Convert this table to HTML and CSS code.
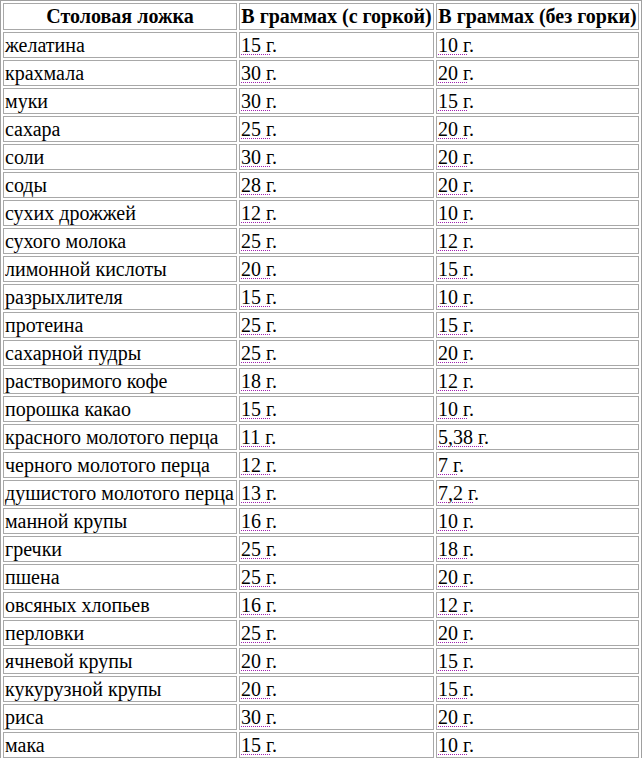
FILE: index.html
```html
<!DOCTYPE html>
<html lang="ru">
<head>
<meta charset="utf-8">
<title>Столовая ложка</title>
<link rel="stylesheet" href="styles.css">
</head>
<body>
<table class="grid">
<colgroup>
<col class="c1"><col class="c2"><col class="c3">
</colgroup>
<thead>
<tr><th>Столовая ложка</th><th>В граммах (с горкой)</th><th>В граммах (без горки)</th></tr>
</thead>
<tbody>
<tr><td>желатина</td><td><span class="u">15 г</span>.</td><td><span class="u">10 г</span>.</td></tr>
<tr><td>крахмала</td><td><span class="u">30 г</span>.</td><td><span class="u">20 г</span>.</td></tr>
<tr><td>муки</td><td><span class="u">30 г</span>.</td><td><span class="u">15 г</span>.</td></tr>
<tr><td>сахара</td><td><span class="u">25 г</span>.</td><td><span class="u">20 г</span>.</td></tr>
<tr><td>соли</td><td><span class="u">30 г</span>.</td><td><span class="u">20 г</span>.</td></tr>
<tr><td>соды</td><td><span class="u">28 г</span>.</td><td><span class="u">20 г</span>.</td></tr>
<tr><td>сухих дрожжей</td><td><span class="u">12 г</span>.</td><td><span class="u">10 г</span>.</td></tr>
<tr><td>сухого молока</td><td><span class="u">25 г</span>.</td><td><span class="u">12 г</span>.</td></tr>
<tr><td>лимонной кислоты</td><td><span class="u">20 г</span>.</td><td><span class="u">15 г</span>.</td></tr>
<tr><td>разрыхлителя</td><td><span class="u">15 г</span>.</td><td><span class="u">10 г</span>.</td></tr>
<tr><td>протеина</td><td><span class="u">25 г</span>.</td><td><span class="u">15 г</span>.</td></tr>
<tr><td>сахарной пудры</td><td><span class="u">25 г</span>.</td><td><span class="u">20 г</span>.</td></tr>
<tr><td>растворимого кофе</td><td><span class="u">18 г</span>.</td><td><span class="u">12 г</span>.</td></tr>
<tr><td>порошка какао</td><td><span class="u">15 г</span>.</td><td><span class="u">10 г</span>.</td></tr>
<tr><td>красного молотого перца</td><td><span class="u">11 г</span>.</td><td><span class="u">5,38 г</span>.</td></tr>
<tr><td>черного молотого перца</td><td><span class="u">12 г</span>.</td><td><span class="u">7 г</span>.</td></tr>
<tr><td>душистого молотого перца</td><td><span class="u">13 г</span>.</td><td><span class="u">7,2 г</span>.</td></tr>
<tr><td>манной крупы</td><td><span class="u">16 г</span>.</td><td><span class="u">10 г</span>.</td></tr>
<tr><td>гречки</td><td><span class="u">25 г</span>.</td><td><span class="u">18 г</span>.</td></tr>
<tr><td>пшена</td><td><span class="u">25 г</span>.</td><td><span class="u">20 г</span>.</td></tr>
<tr><td>овсяных хлопьев</td><td><span class="u">16 г</span>.</td><td><span class="u">12 г</span>.</td></tr>
<tr><td>перловки</td><td><span class="u">25 г</span>.</td><td><span class="u">20 г</span>.</td></tr>
<tr><td>ячневой крупы</td><td><span class="u">20 г</span>.</td><td><span class="u">15 г</span>.</td></tr>
<tr><td>кукурузной крупы</td><td><span class="u">20 г</span>.</td><td><span class="u">15 г</span>.</td></tr>
<tr><td>риса</td><td><span class="u">30 г</span>.</td><td><span class="u">20 г</span>.</td></tr>
<tr><td>мака</td><td><span class="u">15 г</span>.</td><td><span class="u">10 г</span>.</td></tr>
</tbody>
</table>
</body>
</html>
```

FILE: styles.css
```css
html, body {
  margin: 0;
  padding: 0;
  background: #ffffff;
}

body {
  font-family: "Liberation Serif", "Times New Roman", serif;
  font-size: 20px;
  color: #000000;
}

.grid {
  table-layout: fixed;
  width: 642px;
  border-collapse: separate;
  border-spacing: 2px;
  border: 1px solid #a0a0a0;
}

.c1 { width: 234px; }
.c2 { width: 195px; }
.c3 { width: 203px; }

.grid th,
.grid td {
  box-sizing: border-box;
  border: 1px solid #a8a8a8;
  white-space: nowrap;
  overflow: hidden;
}

.grid th {
  font-weight: bold;
  text-align: center;
  line-height: 23px;
  padding: 1px 1px;
}

.grid td {
  text-align: left;
  line-height: 23px;
  padding: 1px 1px 0 1px;
}

.u {
  text-decoration-line: underline;
  text-decoration-style: dotted;
  text-decoration-color: #a020b0;
  text-decoration-thickness: 1px;
  text-underline-offset: 2px;
}
```
